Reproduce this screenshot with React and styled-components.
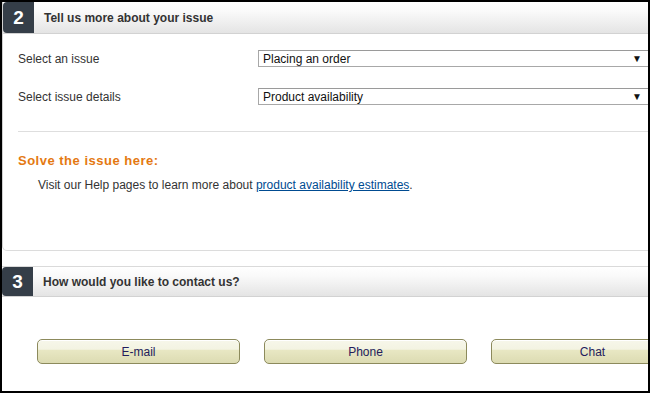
import React from "react";
import styled, { createGlobalStyle } from "styled-components";

const Global = createGlobalStyle`
  html, body { margin: 0; padding: 0; background: #fff; }
  body { font-family: Arial, "Liberation Sans", Helvetica, sans-serif; }
  * { box-sizing: border-box; }
`;

const Frame = styled.div`
  width: 650px;
  height: 393px;
  border: 2px solid #000;
  overflow: hidden;
  background: #fff;
`;

const Canvas = styled.div`
  width: 720px;
  display: flex;
  flex-direction: column;
`;

const Section = styled.section`
  border: 1px solid #dcdcdc;
  border-left-color: #d0d0d0;
  border-top: none;
  border-radius: 0 0 5px 5px;
  height: ${(p) => p.$height}px;
  margin-bottom: ${(p) => p.$gap || 0}px;
  display: flex;
  flex-direction: column;
  ${(p) => p.$noBorder && "border: none;"}
`;

const Header = styled.div`
  height: ${(p) => p.$h}px;
  display: flex;
  align-items: stretch;
  background: linear-gradient(#ffffff, #fafafa 30%, #e4e4e4);
  border-top: ${(p) => (p.$top ? "1px solid #dadada" : "none")};
  border-bottom: 1px solid #d2d2d2;
`;

const Num = styled.div`
  width: 31px;
  background: #353e48;
  color: #fff;
  font: bold 19px Arial, "Liberation Sans", sans-serif;
  display: flex;
  align-items: center;
  justify-content: center;
  border-radius: 4px 0 0 4px;
`;

const Title = styled.div`
  margin-left: 10px;
  display: flex;
  align-items: center;
  font-weight: bold;
  font-size: 12px;
  color: #333;
`;

const Body = styled.div`
  padding: 16px 0 0 15px;
  display: flex;
  flex-direction: column;
`;

const FormRow = styled.div`
  display: grid;
  grid-template-columns: 240px 393px;
  align-items: center;
  margin-bottom: ${(p) => p.$mb}px;
`;

const Label = styled.div`
  font-size: 12px;
  color: #333;
`;

const Select = styled.div`
  height: 17px;
  border: 1px solid #a8a8a8;
  border-top-color: #9a9a9a;
  background: #fff;
  display: flex;
  align-items: center;
  justify-content: space-between;
  padding: 0 8px 0 4px;
  font-size: 12px;
  color: #111;
`;

const Arrow = styled.span`
  font-size: 10px;
  color: #111;
`;

const Rule = styled.hr`
  border: none;
  border-top: 1px solid #dedede;
  margin: 0;
  width: 100%;
`;

const SolveTitle = styled.h3`
  margin: 21px 0 0 0;
  font-size: 13px;
  font-weight: bold;
  color: #e47911;
  letter-spacing: 0.5px;
`;

const Help = styled.p`
  margin: 10px 0 0 20px;
  font-size: 12px;
  color: #333;
`;

const Link = styled.a`
  color: #004b91;
  text-decoration: underline;
`;

const Buttons = styled.div`
  display: flex;
  gap: 24px;
  padding: 42px 0 0 35px;
`;

const Button = styled.button`
  width: 203px;
  height: 25px;
  flex: none;
  border: 1px solid #8c8a5c;
  border-radius: 5px;
  background: linear-gradient(#f7f7ea 0%, #f3f3e2 40%, #e8e7c3 45%, #dcdbb2 100%);
  box-shadow: inset 0 1px 0 #fff;
  font: 12px Arial, "Liberation Sans", sans-serif;
  color: #231c5c;
  padding: 0;
  cursor: pointer;
`;

export default function App() {
  return (
    <>
      <Global />
      <Frame>
        <Canvas>
          <Section $height={249} $gap={15}>
            <Header $h={32}>
              <Num>2</Num>
              <Title>Tell us more about your issue</Title>
            </Header>
            <Body>
              <FormRow $mb={21}>
                <Label>Select an issue</Label>
                <Select>
                  <span>Placing an order</span>
                  <Arrow>▼</Arrow>
                </Select>
              </FormRow>
              <FormRow $mb={26}>
                <Label>Select issue details</Label>
                <Select>
                  <span>Product availability</span>
                  <Arrow>▼</Arrow>
                </Select>
              </FormRow>
              <Rule />
              <SolveTitle>Solve the issue here:</SolveTitle>
              <Help>
                Visit our Help pages to learn more about{" "}
                <Link href="#">product availability estimates</Link>.
              </Help>
            </Body>
          </Section>
          <Section $height={130} $noBorder>
            <Header $h={31} $top>
              <Num>3</Num>
              <Title>How would you like to contact us?</Title>
            </Header>
            <Buttons>
              <Button>E-mail</Button>
              <Button>Phone</Button>
              <Button>Chat</Button>
            </Buttons>
          </Section>
        </Canvas>
      </Frame>
    </>
  );
}
